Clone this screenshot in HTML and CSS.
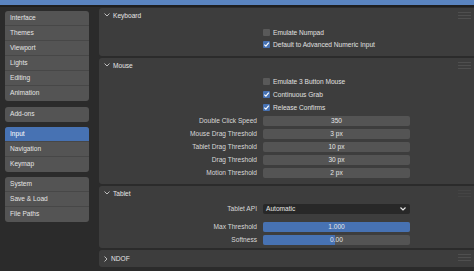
FILE: index.html
```html
<!DOCTYPE html>
<html lang="en">
<head>
    <meta charset="UTF-8">
    <title>Preferences</title>
    <link rel="stylesheet" href="styles.css">
</head>
<body>
    <div class="topbar"></div>
    <div class="window">
        <nav class="sidebar">
            <div class="group">
                <div class="item">Interface</div>
                <div class="item">Themes</div>
                <div class="item">Viewport</div>
                <div class="item">Lights</div>
                <div class="item">Editing</div>
                <div class="item">Animation</div>
            </div>
            <div class="group">
                <div class="item">Add-ons</div>
            </div>
            <div class="group">
                <div class="item active">Input</div>
                <div class="item">Navigation</div>
                <div class="item">Keymap</div>
            </div>
            <div class="group">
                <div class="item">System</div>
                <div class="item">Save &amp; Load</div>
                <div class="item">File Paths</div>
            </div>
        </nav>

        <main class="content">
            <!-- Keyboard -->
            <section class="panel panel-keyboard">
                <div class="panel-head">
                    <svg class="chev" width="6" height="4" viewBox="0 0 6 4"><path d="M0.5 0.5 L3 3 L5.5 0.5" fill="none" stroke="#bdbdbd" stroke-width="1"/></svg>
                    <span>Keyboard</span>
                    <span class="grip"></span>
                </div>
                <div class="panel-body">
                    <div class="row">
                        <div class="label"></div>
                        <div class="check"><span class="box"></span>Emulate Numpad</div>
                    </div>
                    <div class="row">
                        <div class="label"></div>
                        <div class="check"><span class="box on"><svg width="7" height="7" viewBox="0 0 7 7"><path d="M1.3 3.6 L2.9 5.2 L5.8 1.6" fill="none" stroke="#fff" stroke-width="1.2"/></svg></span>Default to Advanced Numeric Input</div>
                    </div>
                </div>
            </section>

            <!-- Mouse -->
            <section class="panel panel-mouse">
                <div class="panel-head">
                    <svg class="chev" width="6" height="4" viewBox="0 0 6 4"><path d="M0.5 0.5 L3 3 L5.5 0.5" fill="none" stroke="#bdbdbd" stroke-width="1"/></svg>
                    <span>Mouse</span>
                    <span class="grip"></span>
                </div>
                <div class="panel-body">
                    <div class="row">
                        <div class="label"></div>
                        <div class="check"><span class="box"></span>Emulate 3 Button Mouse</div>
                    </div>
                    <div class="row">
                        <div class="label"></div>
                        <div class="check"><span class="box on"><svg width="7" height="7" viewBox="0 0 7 7"><path d="M1.3 3.6 L2.9 5.2 L5.8 1.6" fill="none" stroke="#fff" stroke-width="1.2"/></svg></span>Continuous Grab</div>
                    </div>
                    <div class="row">
                        <div class="label"></div>
                        <div class="check"><span class="box on"><svg width="7" height="7" viewBox="0 0 7 7"><path d="M1.3 3.6 L2.9 5.2 L5.8 1.6" fill="none" stroke="#fff" stroke-width="1.2"/></svg></span>Release Confirms</div>
                    </div>
                    <div class="row">
                        <div class="label">Double Click Speed</div>
                        <div class="field">350</div>
                    </div>
                    <div class="row">
                        <div class="label">Mouse Drag Threshold</div>
                        <div class="field">3 px</div>
                    </div>
                    <div class="row">
                        <div class="label">Tablet Drag Threshold</div>
                        <div class="field">10 px</div>
                    </div>
                    <div class="row">
                        <div class="label">Drag Threshold</div>
                        <div class="field">30 px</div>
                    </div>
                    <div class="row">
                        <div class="label">Motion Threshold</div>
                        <div class="field">2 px</div>
                    </div>
                </div>
            </section>

            <!-- Tablet -->
            <section class="panel panel-tablet">
                <div class="panel-head">
                    <svg class="chev" width="6" height="4" viewBox="0 0 6 4"><path d="M0.5 0.5 L3 3 L5.5 0.5" fill="none" stroke="#bdbdbd" stroke-width="1"/></svg>
                    <span>Tablet</span>
                    <span class="grip faint"></span>
                </div>
                <div class="panel-body">
                    <div class="row row-api">
                        <div class="label">Tablet API</div>
                        <div class="field select">
                            <span>Automatic</span>
                            <svg width="6" height="4" viewBox="0 0 6 4"><path d="M0.5 0.5 L3 3 L5.5 0.5" fill="none" stroke="#e6e6e6" stroke-width="1.2"/></svg>
                        </div>
                    </div>
                    <div class="row">
                        <div class="label">Max Threshold</div>
                        <div class="field slider"><span class="fill" style="width: 100%"></span><span class="val">1.000</span></div>
                    </div>
                    <div class="row">
                        <div class="label">Softness</div>
                        <div class="field slider"><span class="fill" style="width: 49%"></span><span class="val">0.00</span></div>
                    </div>
                </div>
            </section>

            <!-- NDOF -->
            <section class="panel panel-ndof">
                <div class="panel-head">
                    <svg class="chev" width="4" height="6" viewBox="0 0 4 6"><path d="M0.5 0.5 L3 3 L0.5 5.5" fill="none" stroke="#bdbdbd" stroke-width="1"/></svg>
                    <span>NDOF</span>
                    <span class="grip"></span>
                </div>
            </section>
        </main>
    </div>
</body>
</html>
```

FILE: styles.css
```css
body {
    margin: 0;
    padding: 0;
    width: 474px;
    height: 271px;
    overflow: hidden;
    background: #2b2b2b;
    font-family: "Liberation Sans", Arial, sans-serif;
    font-size: 6.6px;
    color: #dcdcdc;
}
.topbar {
    height: 5px;
    background: #5a84c0;
    border-bottom: 2px solid #1f1f1f;
}
.window {
    display: flex;
    height: 264px;
}
.sidebar {
    width: 84px;
    padding: 4px 0 0 5px;
    display: flex;
    flex-direction: column;
    gap: 5px;
}
.group {
    background: #545454;
    border-radius: 3px;
    overflow: hidden;
}
.group:first-child {
    margin-bottom: 1px;
}
.item {
    height: 14px;
    line-height: 14px;
    padding-left: 5px;
    border-bottom: 1px solid #474747;
    color: #e4e4e4;
}
.item:last-child {
    border-bottom: none;
    height: 15px;
}
.item.active {
    background: #4772b3;
    color: #fff;
}
.content {
    flex: 1;
    margin-left: 10px;
    padding-top: 1px;
    display: flex;
    flex-direction: column;
    gap: 2px;
}
.panel {
    background: #3d3d3d;
    border-radius: 3px 0 0 3px;
}
.panel-head {
    height: 14px;
    display: flex;
    align-items: center;
    padding-left: 5px;
    position: relative;
    color: #e6e6e6;
}
.panel-head .chev {
    margin-right: 3px;
}
.grip {
    position: absolute;
    right: 3px;
    top: 4px;
    width: 13px;
    height: 5px;
    border-top: 1px solid #4f4f4f;
    border-bottom: 1px solid #4f4f4f;
}
.grip::after {
    content: "";
    position: absolute;
    left: 0;
    right: 0;
    top: 2px;
    border-top: 1px solid #4f4f4f;
}
.grip.faint,
.grip.faint::after {
    border-color: #444;
}
.panel-body {
    padding-bottom: 4px;
}
.panel-keyboard .panel-body {
    padding-top: 4px;
    height: 30px;
    box-sizing: content-box;
    padding-bottom: 0;
}
.panel-keyboard .row {
    height: 12px;
}
.panel-mouse .panel-body {
    padding-top: 3px;
    padding-bottom: 5px;
}
.panel-tablet .panel-body {
    padding-top: 2px;
    padding-bottom: 2px;
}
.panel-tablet .row-api {
    margin-bottom: 5px;
}
.panel-ndof .panel-head {
    height: 17px;
}
.row {
    height: 13px;
    display: flex;
    align-items: center;
}
.label {
    width: 158px;
    padding-right: 6px;
    text-align: right;
    color: #d8d8d8;
}
.check {
    display: flex;
    align-items: center;
    color: #e0e0e0;
}
.box {
    width: 7px;
    height: 7px;
    margin-right: 3px;
    border-radius: 1px;
    background: #595959;
    display: flex;
}
.box.on {
    background: #4772b3;
}
.field {
    width: 147px;
    height: 10px;
    line-height: 10px;
    background: #545454;
    border-radius: 2px;
    text-align: center;
    color: #e6e6e6;
    position: relative;
    overflow: hidden;
}
.field.select {
    background: #282828;
    display: flex;
    align-items: center;
    justify-content: space-between;
    padding: 0 4px 0 3px;
    width: 140px;
    text-align: left;
}
.slider .fill {
    position: absolute;
    left: 0;
    top: 0;
    bottom: 0;
    background: #4772b3;
}
.slider .val {
    position: relative;
}
```
